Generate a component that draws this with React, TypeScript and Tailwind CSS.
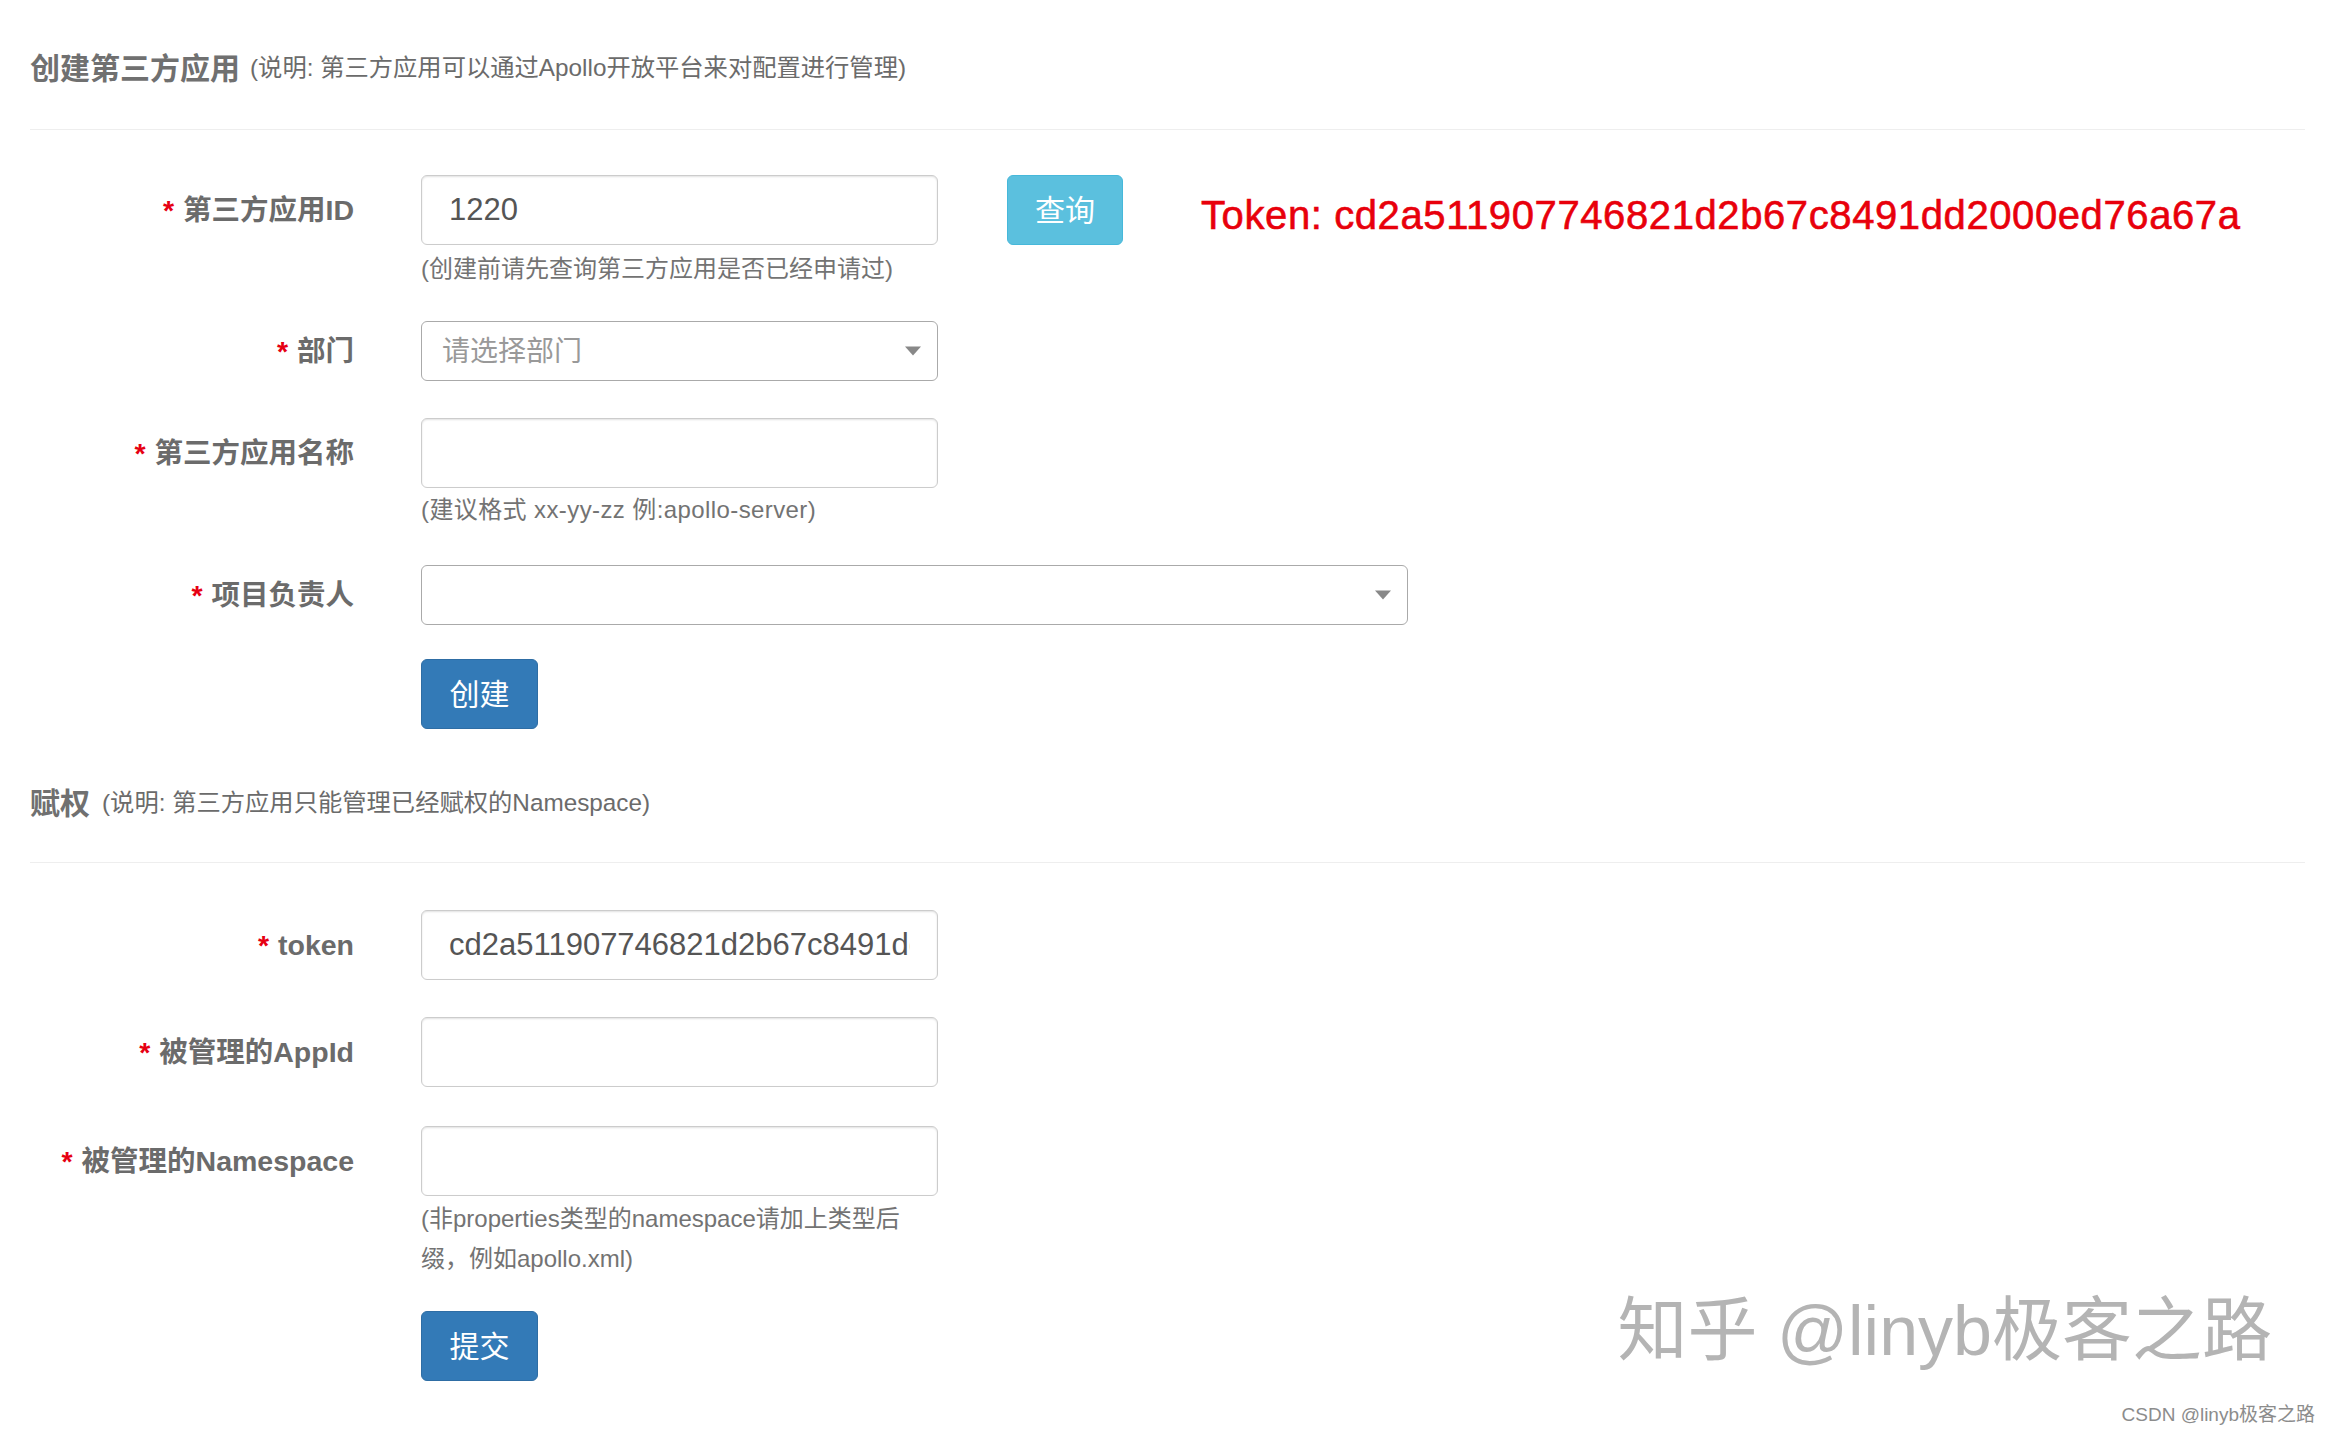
import React from "react";

const Star = () => <span className="mr-[9px] text-[#e60012]">*</span>;

const Label: React.FC<{ text: string; className: string }> = ({ text, className }) => (
  <div className={className}>
    <Star />
    <span>{text}</span>
  </div>
);

const labelBase =
  "flex w-[324px] shrink-0 items-center justify-end text-[28.5px] font-bold text-[#6b6b6b]";

const TextInput: React.FC<{ value?: string }> = ({ value }) => (
  <input
    readOnly
    value={value ?? ""}
    className="h-[70px] w-[517px] rounded-[6px] border border-[#cccccc] bg-white px-[27px] text-[31px] text-[#555] shadow-[inset_0_1px_2px_rgba(0,0,0,0.12)] outline-none"
  />
);

const Select: React.FC<{ placeholder?: string; wide?: boolean }> = ({ placeholder, wide }) => (
  <div
    className={
      wide
        ? "relative flex h-[60px] w-[987px] items-center rounded-[6px] border border-[#aaaaaa] bg-white pl-[20px] text-[28px] text-[#999]"
        : "relative flex h-[60px] w-[517px] items-center rounded-[6px] border border-[#aaaaaa] bg-white pl-[20px] text-[28px] text-[#999]"
    }
  >
    <span className="mt-[2px]">{placeholder}</span>
    <span className="absolute right-[16px] top-1/2 -translate-y-1/2 border-x-[8px] border-t-[9px] border-x-transparent border-t-[#888]" />
  </div>
);

const Help: React.FC<{ children: React.ReactNode; className?: string }> = ({ children, className }) => (
  <div className={"whitespace-nowrap text-[24px] leading-[40px] text-[#737373] " + (className ?? "")}>{children}</div>
);

export default function App() {
  return (
    <div className="relative min-h-[1438px] w-full overflow-hidden bg-white pl-[30px] pr-[27px] pt-[48px] font-['Liberation_Sans','Noto_Sans_CJK_SC',sans-serif]">
      {/* 创建第三方应用 */}
      <div className="flex h-[40px] items-center whitespace-nowrap">
        <span className="text-[30px] font-bold text-[#707070]">创建第三方应用</span>
        <span className="ml-[10px] text-[24.3px] text-[#6b6b6b]">(说明: 第三方应用可以通过Apollo开放平台来对配置进行管理)</span>
      </div>
      <div className="mt-[41px] h-px bg-[#eeeeee]" />

      <div className="mt-[45px] flex gap-[67px]">
        <Label text="第三方应用ID" className={labelBase + " h-[70px]"} />
        <div>
          <TextInput value="1220" />
          <Help className="mt-[4px]">(创建前请先查询第三方应用是否已经申请过)</Help>
        </div>
        <div className="flex h-[70px] items-center">
          <button className="ml-[2px] h-[70px] w-[116px] rounded-[6px] border border-[#46b8da] bg-[#5bc0de] text-[30px] text-white">
            查询
          </button>
          <span className="ml-[78px] mt-[10px] whitespace-nowrap text-[40px] tracking-[0.6px] text-[#e8000b] [-webkit-text-stroke:0.6px_#e8000b]">
            Token: cd2a511907746821d2b67c8491dd2000ed76a67a
          </span>
        </div>
      </div>

      <div className="mt-[32px] flex gap-[67px]">
        <Label text="部门" className={labelBase + " h-[60px]"} />
        <Select placeholder="请选择部门" />
      </div>

      <div className="mt-[37px] flex gap-[67px]">
        <Label text="第三方应用名称" className={labelBase + " h-[70px]"} />
        <div>
          <TextInput />
          <Help className="mt-[2px] tracking-[0.4px]">(建议格式 xx-yy-zz 例:apollo-server)</Help>
        </div>
      </div>

      <div className="mt-[35px] flex gap-[67px]">
        <Label text="项目负责人" className={labelBase + " h-[60px]"} />
        <Select wide />
      </div>

      <div className="mt-[34px] flex gap-[67px]">
        <div className="w-[324px] shrink-0" />
        <button className="h-[70px] w-[117px] rounded-[6px] border border-[#2e6da4] bg-[#337ab7] text-[30px] text-white">
          创建
        </button>
      </div>

      {/* 赋权 */}
      <div className="mt-[54px] flex h-[40px] items-center whitespace-nowrap">
        <span className="text-[30px] font-bold text-[#707070]">赋权</span>
        <span className="ml-[12px] text-[24.3px] text-[#6b6b6b]">(说明: 第三方应用只能管理已经赋权的Namespace)</span>
      </div>
      <div className="mt-[39px] h-px bg-[#eeeeee]" />

      <div className="mt-[47px] flex gap-[67px]">
        <Label text="token" className={labelBase + " h-[70px]"} />
        <TextInput value="cd2a511907746821d2b67c8491dd2000ed76a67a" />
      </div>

      <div className="mt-[37px] flex gap-[67px]">
        <Label text="被管理的AppId" className={labelBase + " h-[70px]"} />
        <TextInput />
      </div>

      <div className="mt-[39px] flex gap-[67px]">
        <Label text="被管理的Namespace" className={labelBase + " h-[70px]"} />
        <div>
          <TextInput />
          <Help className="mt-[3px]">
            (非properties类型的namespace请加上类型后
            <br />
            缀，例如apollo.xml)
          </Help>
        </div>
      </div>

      <div className="mt-[32px] flex gap-[67px]">
        <div className="w-[324px] shrink-0" />
        <button className="h-[70px] w-[117px] rounded-[6px] border border-[#2e6da4] bg-[#337ab7] text-[30px] text-white">
          提交
        </button>
      </div>

      {/* watermarks */}
      <div className="pointer-events-none absolute right-[60px] top-[1296px] whitespace-nowrap text-[70px] leading-none text-[#b4b4b4] [text-shadow:-2px_-2px_0_#ffffff]">
        知乎 @linyb极客之路
      </div>
      <div className="pointer-events-none absolute right-[17px] top-[1405px] whitespace-nowrap text-[19px] leading-none text-[#8c8c8c]">
        CSDN @linyb极客之路
      </div>
    </div>
  );
}
